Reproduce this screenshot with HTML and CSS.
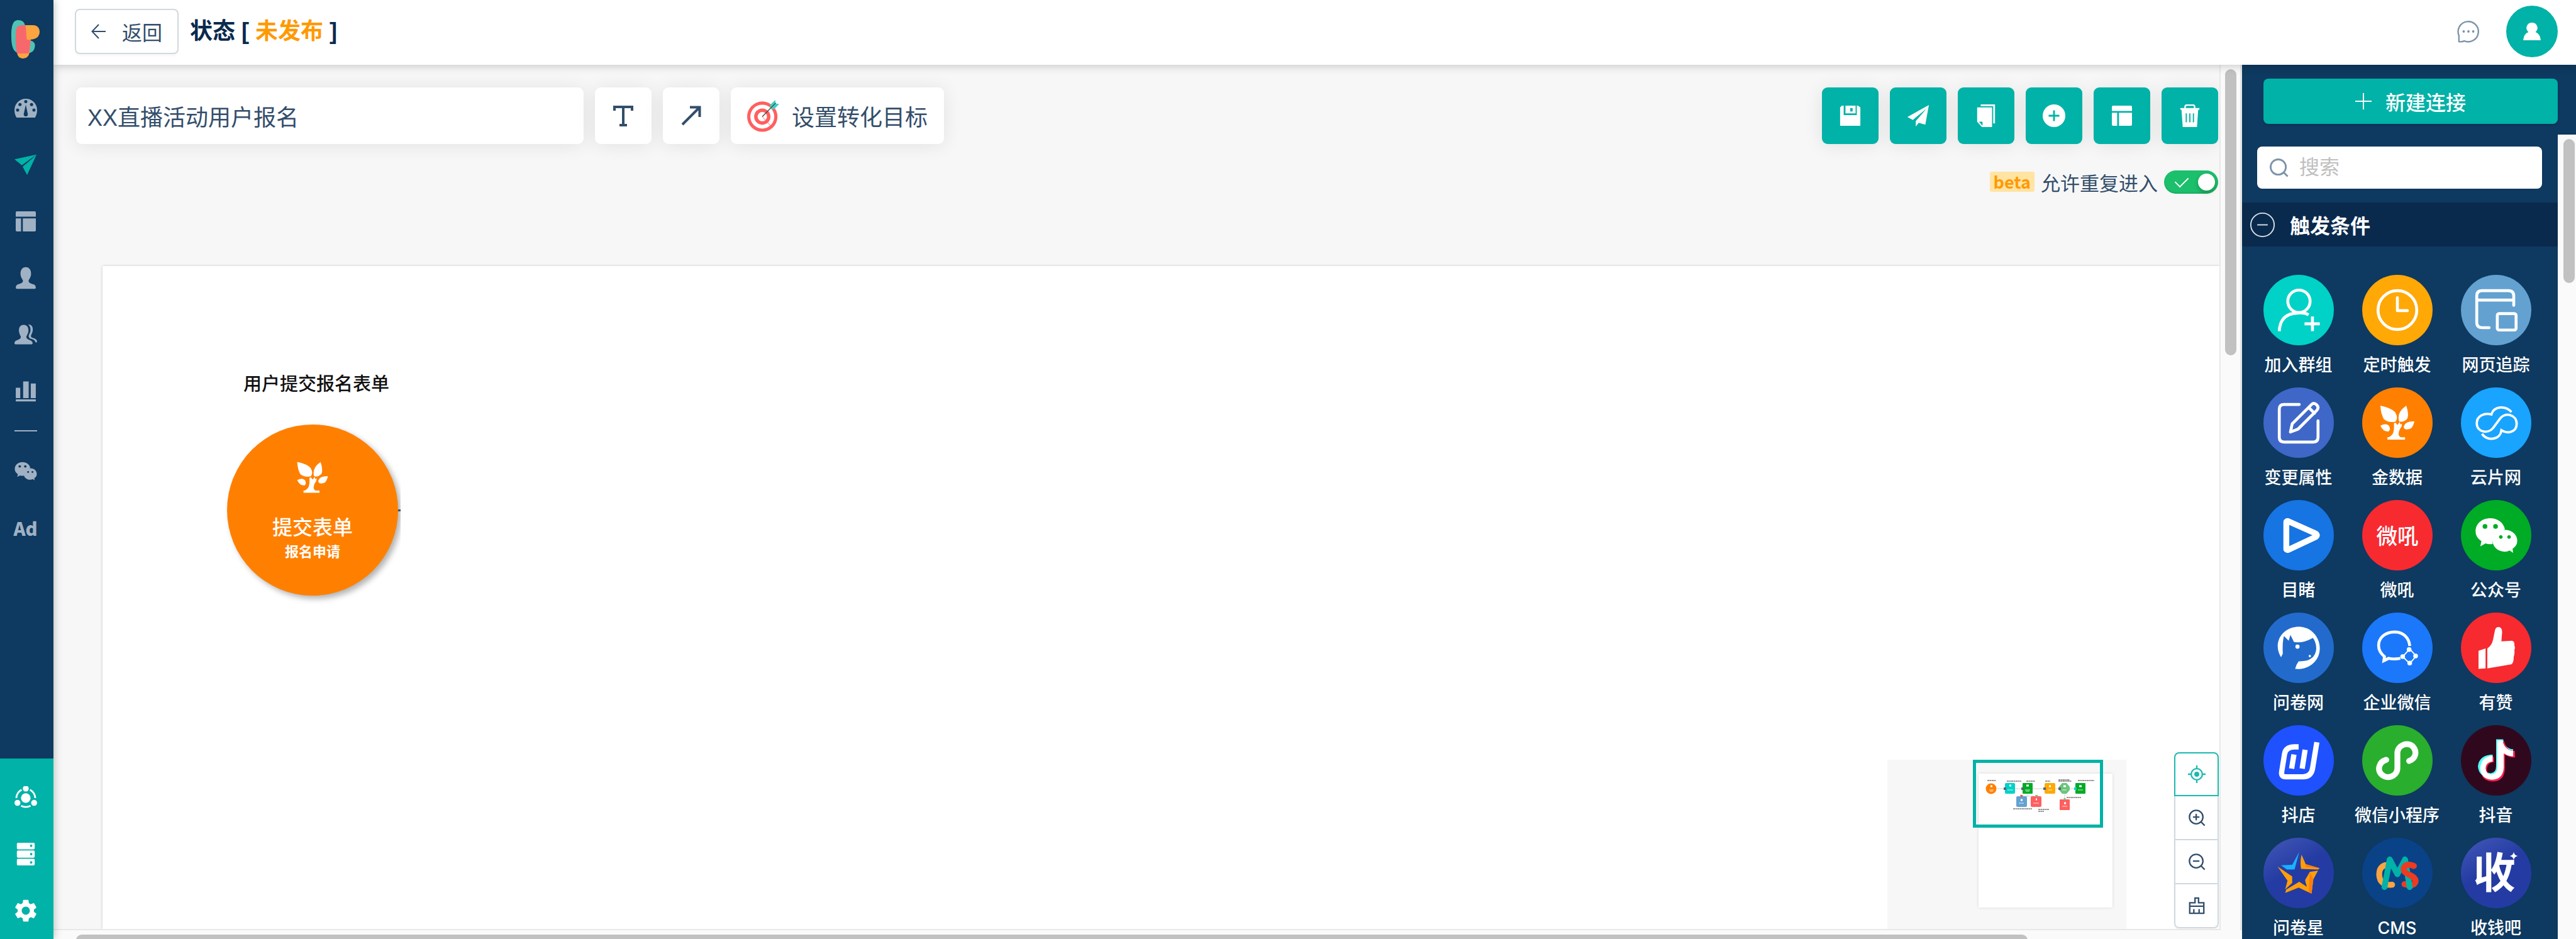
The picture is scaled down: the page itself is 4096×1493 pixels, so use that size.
FILE: index.html
```html
<!DOCTYPE html>
<html lang="zh-CN">

<head>
    <meta charset="UTF-8">
    <meta name="viewport" content="width=device-width, initial-scale=1.0">
    <title>XX直播活动用户报名</title>
    <link rel="stylesheet" href="styles.css">
</head>

<body>
    <!-- shared icons -->
    <svg class="sprite" aria-hidden="true">
        <symbol id="i-layout" viewBox="0 0 34 34">
            <path d="M2 0H32Q34 0 34 2V9H0V2Q0 0 2 0ZM0 12H9V34H2Q0 34 0 32ZM12 12H34V32Q34 34 32 34H12Z" />
        </symbol>
        <symbol id="i-tree" viewBox="28 28 64 64">
            <path d="M31 31Q50 35 56 42Q62 51 57 58Q46 61 37 54Q32 46 31 31ZM75 31Q80 45 77 53Q71 60 63 58Q60 49 65 41Q68 36 75 31ZM31 65Q42 60 46 66Q49 72 45 75Q36 76 31 65ZM89 58Q86 70 80 71Q70 73 71 66Q74 57 89 58ZM54 61L57 60L60 64L64 59L65 63L68 62L67 67Q62 73 62 80Q63 84 66 85H73V89H43V85Q48 85 52 79Q55 73 54 61Z" />
        </symbol>
        <symbol id="i-wechat" viewBox="24 28 73 64">
            <path d="M50 31C36 31 25 40 25 53C25 61 29 66 35 70L33 79L42 74Q47 76 54 75Q53 58 75 50C73 39 63 31 50 31Z" />
            <path d="M75 51C63 51 54 59 54 69.500C54 80 63 88 75 88Q79 88 83 86L89 90L88 83Q96 78 96 69.500C96 59 87 51 75 51Z" />
            <g class="eyes">
                <circle cx="41" cy="45" r="4" />
                <circle cx="59" cy="45" r="4" />
                <circle cx="68" cy="63" r="3" />
                <circle cx="82" cy="63" r="3" />
            </g>
        </symbol>
    </svg>

    <div class="app">
        <nav class="sidebar">
            <a class="logo" href="#" aria-label="首页">
                <svg viewBox="0 0 107 145">
                    <path fill="#4dc3b5" d="M26 0C44 0 52 10 52 25V78H75C88 82 92 92 88 105C84 120 74 125 55 125H28C8 122 0 100 0 62C0 20 6 0 26 0Z" />
                    <path fill="#fba440" d="M40 19H82C98 19 107 29 107 44C107 62 94 73 74 73L68 125C66 138 56 145 44 145C32 145 24 138 22 125Z" />
                    <path fill="#f7686c" d="M17 45C17 28 25 19 40 19H52C57 19 56 72 60 74H74L68 118Q66 126 60 126H22C16 110 16 60 17 45Z" />
                </svg>
            </a>
            <a class="item" href="#" aria-label="仪表盘">
                <svg viewBox="0 0 86 86">
                    <path d="M8 79Q0 66 0 50A43 43 0 0 1 86 50Q86 66 78 79Z" />
                    <g class="eyes">
                        <circle cx="43" cy="18" r="6" />
                        <circle cx="21" cy="29" r="6" />
                        <circle cx="65" cy="29" r="6" />
                        <circle cx="12" cy="50" r="6" />
                        <circle cx="74" cy="50" r="6" />
                        <path d="M43 30L51 66Q50 74 43 74Q36 74 35 66Z" />
                    </g>
                </svg>
            </a>
            <a class="item active" href="#" aria-label="自动流程">
                <svg viewBox="0 0 86 86">
                    <path d="M0 22L84 4L28 45ZM31 50L68 19L84 4L48 82Z" />
                </svg>
            </a>
            <a class="item" href="#" aria-label="页面"><svg class="small"><use href="#i-layout" /></svg></a>
            <a class="item" href="#" aria-label="用户">
                <svg viewBox="0 0 86 86">
                    <path d="M43 2C56 2 64 13 63 29C62 41 56 46 54 52C53 60 58 63 72 67Q81 70 81 80Q81 84 77 84H9Q5 84 5 80Q5 70 14 67C28 63 33 60 32 52C30 46 24 41 23 29C22 13 30 2 43 2Z" />
                </svg>
            </a>
            <a class="item" href="#" aria-label="群组">
                <svg viewBox="0 0 86 86">
                    <path d="M35 6C48 6 54 16 53 30C52 40 47 45 45 51C45 58 50 61 61 65Q69 69 69 76Q69 80 65 80H4Q0 80 0 76Q0 68 8 65C19 61 25 58 24 51C22 45 18 40 17 30C16 16 22 6 35 6Z" />
                    <path d="M52 5C66 3 72 16 69 30C67 40 62 44 63 50Q63 54 72 56Q86 60 86 70Q85 74 80 72Q78 64 66 60Q54 57 54 50C54 42 60 38 61 27Q62 13 52 5Z" />
                </svg>
            </a>
            <a class="item" href="#" aria-label="报表">
                <svg viewBox="0 0 86 86">
                    <path d="M5 30H22V69H5ZM33 6H54V69H33ZM62 14H81V69H62ZM5 74H81V82H5Z" />
                </svg>
            </a>
            <div class="split"></div>
            <a class="item" href="#" aria-label="微信"><svg><use href="#i-wechat" /></svg></a>
            <a class="item ad" href="#">Ad</a>
            <div class="sidebar-bottom">
                <a class="item" href="#" aria-label="连接">
                    <svg viewBox="0 0 38 38">
                        <circle cx="19" cy="20" r="8" />
                        <circle cx="19" cy="4" r="5" />
                        <circle cx="5" cy="28" r="5" />
                        <circle cx="33" cy="28" r="5" />
                        <path fill="none" stroke="#fff" stroke-width="3" d="M12 6Q4 10 3 20M26 6Q34 10 35 20M11 33Q19 37 27 33" />
                    </svg>
                </a>
                <a class="item" href="#" aria-label="数据">
                    <svg viewBox="0 0 38 38">
                        <rect x="4" y="0" width="30" height="11" rx="2" />
                        <rect x="4" y="13" width="30" height="12" rx="2" />
                        <rect x="4" y="27" width="30" height="11" rx="2" />
                        <g class="eyes">
                            <circle cx="28" cy="5" r="2" />
                            <circle cx="28" cy="19" r="2" />
                            <circle cx="28" cy="33" r="2" />
                        </g>
                    </svg>
                </a>
                <a class="item" href="#" aria-label="设置">
                    <svg viewBox="2 2 20 20">
                        <path d="M19.140 12.940c.04-.3.060-.61.060-.94 0-.32-.02-.64-.07-.94l2.030-1.580c.18-.14.230-.41.120-.61l-1.920-3.320c-.12-.22-.37-.29-.59-.22l-2.390.960c-.5-.38-1.030-.7-1.620-.94l-.36-2.540c-.04-.24-.24-.41-.48-.41h-3.840c-.24 0-.43.170-.47.410l-.36 2.540c-.59.240-1.130.570-1.620.940l-2.390-.96c-.22-.08-.47 0-.59.220L2.740 8.870c-.12.210-.08.470.120.610l2.030 1.580c-.05.3-.09.630-.09.940s.02.640.070.940l-2.030 1.580c-.18.140-.23.410-.12.610l1.920 3.320c.12.220.370.290.590.220l2.390-.96c.5.380 1.030.7 1.620.940l.36 2.540c.05.240.240.410.480.410h3.840c.24 0 .44-.17.470-.41l.36-2.540c.59-.24 1.130-.56 1.620-.94l2.390.960c.22.080.470 0 .59-.22l1.920-3.320c.12-.22.070-.47-.12-.61l-2.010-1.580zM12 15.600c-1.980 0-3.600-1.620-3.600-3.600s1.620-3.600 3.600-3.600 3.600 1.620 3.600 3.600-1.620 3.600-3.600 3.600z" />
                    </svg>
                </a>
            </div>
        </nav>

        <div class="content">
            <header class="topbar">
                <button type="button" class="back">
                    <svg viewBox="0 0 24 24"><path d="M23 12H2M12 1L1.500 12L12 23" /></svg>
                    返回
                </button>
                <h1 class="status">状态 [ <span>未发布</span> ]</h1>
                <button type="button" class="chat" aria-label="消息">
                    <svg viewBox="0 0 38 38">
                        <path d="M3 36V26A17 17 0 1 1 12 35Q8 37 3 36Z" />
                        <path class="dots" d="M11 19H11.010M19 19H19.010M27 19H27.010" />
                    </svg>
                </button>
                <button type="button" class="avatar" aria-label="账户">
                    <svg viewBox="0 0 30 30"><path d="M15 0A9 9 0 0 1 21 16Q29 19 30 30H0Q1 19 9 16A9 9 0 0 1 15 0Z" /></svg>
                </button>
            </header>

            <div class="work">
                <main class="editor">
                    <div class="canvas">
                        <div class="toolbar">
                            <input type="text" class="flow-name" value="XX直播活动用户报名" aria-label="流程名称">
                            <button type="button" class="tool" aria-label="文字">
                                <svg viewBox="0 0 34 34"><path d="M3 9V3H31V9M17 3V32M11 32H23" /></svg>
                            </button>
                            <button type="button" class="tool" aria-label="箭头">
                                <svg viewBox="0 0 34 34"><path d="M3 31L30 4M15 3.500H30.500V19" /></svg>
                            </button>
                            <button type="button" class="tool goal">
                                <svg viewBox="0 0 55 55">
                                    <circle cx="26" cy="28.500" r="26" fill="#ff5f60" />
                                    <circle cx="26" cy="28.500" r="20.500" fill="#fff" />
                                    <circle cx="26" cy="28.500" r="14" fill="#ff5f60" />
                                    <circle cx="26" cy="28.500" r="8" fill="#fff" />
                                    <path d="M26 28.500L42 46" fill="none" stroke="#ff5f60" stroke-width="1" />
                                    <path d="M39 9L48 0L49 6L55 7L46 16L40 15Z" fill="#40cfc4" />
                                    <path d="M26 28.500L49 5" fill="none" stroke="#444" stroke-width="1.500" />
                                </svg>
                                设置转化目标
                            </button>
                            <div class="actions">
                                <button type="button" class="action" aria-label="保存">
                                    <svg viewBox="0 0 38 38">
                                        <path d="M5 2H8V18H30V2H32L36 5V36H2V5Z" />
                                        <path fill-rule="evenodd" d="M11 2H28V15H11ZM19 6V12H23V6Z" />
                                    </svg>
                                </button>
                                <button type="button" class="action" aria-label="发布">
                                    <svg viewBox="0 0 38 38"><path d="M37 1L1 21L10 26L33 7L15 28V37L20 31L31 34Z" /></svg>
                                </button>
                                <button type="button" class="action" aria-label="复制">
                                    <svg viewBox="0 0 38 38">
                                        <path d="M10 0H34V32H31V3H10Z" />
                                        <path fill-rule="evenodd" d="M4 5H29V38H12L4 29ZM7 29L13 36V29Z" />
                                    </svg>
                                </button>
                                <button type="button" class="action" aria-label="新增">
                                    <svg viewBox="0 0 38 38">
                                        <circle cx="19" cy="19" r="19" />
                                        <path fill="none" stroke="#00b2a7" stroke-width="3" d="M19 10V28M10 19H28" />
                                    </svg>
                                </button>
                                <button type="button" class="action" aria-label="布局"><svg class="small"><use href="#i-layout" /></svg></button>
                                <button type="button" class="action" aria-label="删除">
                                    <svg viewBox="0 0 38 38">
                                        <path d="M3 6H35V9H33L31 38H7L5 9H3Z" />
                                        <path fill="none" stroke="#fff" stroke-width="2.500" d="M11 7V4Q11 1 14 1H24Q27 1 27 4V7" />
                                        <path fill="none" stroke="#00b2a7" stroke-width="2" d="M13 15V30M19 15V30M25 15V30" />
                                    </svg>
                                </button>
                            </div>
                        </div>

                        <div class="options">
                            <span class="beta">beta</span>
                            <label for="repeat">允许重复进入</label>
                            <input type="checkbox" id="repeat" class="switch" checked>
                        </div>

                        <div class="paper">
                            <div class="node">
                                <p class="node-note">用户提交报名表单</p>
                                <div class="node-clip">
                                    <div class="node-circle">
                                        <svg><use href="#i-tree" /></svg>
                                        <strong>提交表单</strong>
                                        <span>报名申请</span>
                                    </div>
                                </div>
                            </div>
                        </div>

                        <!-- minimap -->
                        <div class="minimap">
                            <svg viewBox="0 0 380 269">
                                <rect x="145" y="22" width="213" height="213" class="mini-paper" />
                                <g stroke="#ccd3da" stroke-width="1">
                                    <path d="M174 46H300M223 55V58M282 54V63M212 58H238" />
                                </g>
                                <circle cx="165" cy="46" r="8.500" fill="#ff8000" />
                                <rect x="187" y="37" width="16" height="17" rx="2" fill="#00d2c8" />
                                <rect x="215" y="37" width="16" height="17" rx="1" fill="#00ab25" />
                                <rect x="250" y="37" width="17" height="17" rx="2" fill="#ffa806" />
                                <path d="M278 37H285L290 43V48L285 54H278L273 48V43Z" fill="#6cc57b" />
                                <rect x="299" y="37" width="16" height="17" rx="1" fill="#00ab25" />
                                <rect x="205" y="58" width="17" height="17" rx="2" fill="#63a1d1" />
                                <rect x="228" y="58" width="17" height="17" rx="2" fill="#ff5f60" />
                                <rect x="274" y="63" width="16" height="17" rx="1" fill="#ff5f60" />
                                <path d="M185 44H189V48H185ZM213 44H217V48H213ZM248 44H252V48H248ZM272 44H276V48H272Z" fill="#56657a" />
                                <path d="M211 56H216L213 60Z" fill="#f44" />
                                <path d="M235 56H240L237 60ZM280 61H284L282 65Z" fill="#6cc57b" />
                                <path d="M297 44H301V48H297Z" fill="#00d2c8" />
                                <path d="M159 33H173M190 34H213M221 34H235M251 34H259M272 32H290M272 34H293M303 33H329M285 60H308M200 78H230M240 79H257M240 82H249" fill="none" stroke="#777" stroke-width="1.500" stroke-dasharray="3 .5" />
                                <path d="M162 48H169M163 50H168M191 48H200M219 48H227M220 50H226M255 48H262M278 48H285M303 48H311M209 69H217M232 69H241M278 74H286" fill="none" stroke="#fff" opacity=".8" />
                                <path d="M164 42H167M194 41H197M221 41H225M257 42H260M280 42H284M305 42H309M212 64H215M236 63H238M281 69H284" fill="none" stroke="#fff" stroke-width="3" />
                                <rect x="138.500" y="2.500" width="202" height="103" class="mini-frame" />
                            </svg>
                        </div>

                        <div class="zoom">
                            <button type="button" class="on" aria-label="定位">
                                <svg viewBox="0 0 30 30"><circle cx="15" cy="15" r="9.500" /><path d="M15 0V6M15 24V30M0 15H6M24 15H30" /><circle cx="15" cy="15" r="3" fill="currentColor" /></svg>
                            </button>
                            <button type="button" aria-label="放大">
                                <svg viewBox="0 0 30 30"><circle cx="14" cy="14" r="11.500" /><path d="M22 22L28.500 28.500M14 8.500V19.500M8.500 14H19.500" /></svg>
                            </button>
                            <button type="button" aria-label="缩小">
                                <svg viewBox="0 0 30 30"><circle cx="14" cy="14" r="11.500" /><path d="M22 22L28.500 28.500M8.500 14H19.500" /></svg>
                            </button>
                            <button type="button" aria-label="清理">
                                <svg viewBox="0 0 30 30"><path d="M3 10H12V2H18V10H27V28H3ZM3 16H27M10 28V21M19 28V21" /></svg>
                            </button>
                        </div>
                    </div>
                    <div class="track-y"><div class="thumb"></div></div>
                    <div class="track-x"><div class="thumb"></div></div>
                </main>

                <aside class="panel">
                    <button type="button" class="new-link">
                        <svg viewBox="0 0 26 26"><path d="M13 0V26M0 13H26" /></svg>
                        新建连接
                    </button>
                    <div class="panel-body">
                        <div class="panel-list">
                            <div class="search">
                                <svg viewBox="0 0 31 31"><circle cx="14" cy="14" r="12.500" /><path d="M23 23L29.500 29.500" /></svg>
                                <input type="search" placeholder="搜索" aria-label="搜索">
                            </div>
                            <h2 class="group">
                                <svg viewBox="0 0 42 42"><circle cx="21" cy="21" r="20" /><path d="M12 21H30" /></svg>
                                触发条件
                            </h2>
                            <div class="triggers">
                                <button type="button" class="trigger">
                                    <svg class="line" style="background:#00d2c8" viewBox="0 0 120 120"><circle cx="60.500" cy="45" r="19" /><path d="M27 96C28 76 38 65 60 65Q70 64 77 68M83.500 71V96M70 83.500H96" /></svg>
                                    加入群组
                                </button>
                                <button type="button" class="trigger">
                                    <svg class="line" style="background:#ffa806" viewBox="0 0 120 120"><circle cx="60" cy="60" r="33" /><path stroke-linecap="round" stroke-linejoin="round" d="M60 39V61H77" /></svg>
                                    定时触发
                                </button>
                                <button type="button" class="trigger">
                                    <svg class="line" style="background:#63a1d1" viewBox="0 0 120 120"><path stroke-linecap="round" d="M90 52V36Q90 27 81 27H36Q27 27 27 36V81Q27 90 36 90H48M27 43H90" /><rect x="62" y="66" width="32" height="28" rx="3" /></svg>
                                    网页追踪
                                </button>
                                <button type="button" class="trigger">
                                    <svg class="line" style="background:#3e67c8" viewBox="0 0 120 120"><path stroke-linecap="round" stroke-linejoin="round" d="M61 29H35Q27 29 27 37V85Q27 93 35 93H85Q93 93 93 85V57M46 76L49 62L82 29Q86 25 91 30Q95 34 91 39L59 71ZM77 34L87 44" /></svg>
                                    变更属性
                                </button>
                                <button type="button" class="trigger">
                                    <svg style="background:#ff8000" viewBox="0 0 120 120"><use href="#i-tree" x="28" y="28" width="64" height="64" /></svg>
                                    金数据
                                </button>
                                <button type="button" class="trigger">
                                    <svg class="line" style="background:#19a4ff" viewBox="0 0 120 120"><path stroke-width="4" d="M86 42C76 30 56 32 52 46C40 43 27 48 27 61C27 76 46 80 55 69L66 54C75 41 95 46 95 62C95 76 80 80 69 73C67 90 44 92 36 79" /></svg>
                                    云片网
                                </button>
                                <button type="button" class="trigger">
                                    <svg class="line" style="background:#1674e3" viewBox="0 0 120 120"><path stroke-width="10" stroke-linejoin="round" d="M39 37Q41 35 44 37L89 57Q93 60 89 63L44 84Q41 86 39 84Z" /></svg>
                                    目睹
                                </button>
                                <button type="button" class="trigger">
                                    <svg style="background:#f72a30" viewBox="0 0 120 120"><text x="60" y="75" text-anchor="middle" class="mark">微吼</text></svg>
                                    微吼
                                </button>
                                <button type="button" class="trigger wx">
                                    <svg style="background:#00ab25" viewBox="0 0 120 120"><use href="#i-wechat" x="24" y="28" width="73" height="64" /></svg>
                                    公众号
                                </button>
                                <button type="button" class="trigger">
                                    <svg style="background:#226bcd" viewBox="0 0 120 120"><path d="M30 76C14 50 34 24 60 24C82 24 96 42 96 61C96 82 78 98 54 96Q56 88 60 83Q88 84 90 62Q90 50 84 43Q68 53 52 50L46 38L43 48L35 40Q32 50 33 70Z" /><circle cx="58" cy="58" r="3.500" /><circle cx="79" cy="74" r="2" /></svg>
                                    问卷网
                                </button>
                                <button type="button" class="trigger">
                                    <svg class="line" style="background:#1b78fb" viewBox="0 0 120 120"><path d="M81 57C80 42 69 33 55 33C39 33 28 43 28 56C28 64 32 70 38 75L37 82L45 78Q54 80 65 78" /><path stroke-width="2" d="M81 62L69 75L81 87L92 74Z" /><path stroke-width="8" stroke-linecap="round" d="M80 63H80.010M69 75H69.010M91 74H91.010M81 86H81.010" /></svg>
                                    企业微信
                                </button>
                                <button type="button" class="trigger">
                                    <svg style="background:#f72a30" viewBox="0 0 120 120"><path d="M45 61Q53 56 55 45L58 30Q60 23 66 25Q71 27 70 36L69 49L87 48Q92 49 91 56Q93 60 91 64Q92 70 90 75Q90 86 86 88L45 95ZM30 65L42 61V95L30 96Z" /></svg>
                                    有赞
                                </button>
                                <button type="button" class="trigger">
                                    <svg class="line" style="background:#1f51ff" viewBox="0 0 120 120"><path stroke-width="9" d="M60 37H53Q38 37 36 49L31 80Q30 88 38 88H67Q82 88 84 72L91 29M52 50L48 74M71 42L66 74" /></svg>
                                    抖店
                                </button>
                                <button type="button" class="trigger">
                                    <svg class="line" style="background:#2aae2e" viewBox="0 0 120 120"><path stroke-width="10" stroke-linecap="round" d="M41 59C28 63 26 76 32 83C42 94 60 87 60 73V48C60 34 78 27 87 37C94 46 91 57 80 61" /></svg>
                                    微信小程序
                                </button>
                                <button type="button" class="trigger">
                                    <svg style="background:#30081e" viewBox="0 0 120 120">
                                        <path fill="#5ff" d="M60 24H72Q75 40 89 41V52Q80 52 72 46V70Q72 90 53 91Q30 89 29 70Q31 51 54 50V60Q42 61 41 71Q42 82 51 82Q60 81 60 70Z" />
                                        <path fill="#ff1f50" d="M65 28H74Q77 43 92 44V55Q82 55 75 50V74Q74 96 54 96Q40 95 36 86Q34 56 56 54V63Q45 64 44 75Q45 86 55 86Q65 85 65 74Z" />
                                        <path fill="#fff" d="M62 26H71Q74 42 89 44V53Q80 53 73 48V72Q72 92 53 93Q34 92 33 74Q34 54 54 52V62Q43 63 42 73Q43 84 52 84Q62 83 62 72Z" />
                                    </svg>
                                    抖音
                                </button>
                                <button type="button" class="trigger">
                                    <svg class="indigo" viewBox="0 0 120 120">
                                        <path fill="#1ab0ff" d="M61 24L53 54L40 54L30 47L49 46Z" />
                                        <path fill="#ff9e0a" d="M65 29L72 45L96 52L93 54L64 53Q62 40 65 29ZM93 56L85 71L82 95L77 93L72 77L71 72L79 58ZM37 94L39 88L61 75L75 84L77 93L60 85ZM24 49L49 66V77L37 88L41 73Z" />
                                        <path fill="#ff7d0a" d="M72 45L96 52L72 50ZM79 58L77 93L82 95L85 71Z" />
                                    </svg>
                                    问卷星
                                </button>
                                <button type="button" class="trigger">
                                    <svg class="line" style="background:#0a4288" viewBox="0 0 120 120"><g stroke-width="10" stroke-linecap="round" stroke-linejoin="round"><path stroke="#fba440" d="M51 47Q29 43 29 63Q30 82 51 80" /><path stroke="#ec3b22" d="M72 79Q88 84 91 75Q92 68 80 63Q69 58 71 51Q75 43 88 48" /><path stroke="#00b2a7" d="M38 84L47 37L60 62L73 37L81 84" /><path stroke="#ec3b22" d="M88 69Q86 66 80 63Q69 58 71 51Q75 43 88 48" /></g></svg>
                                    CMS
                                </button>
                                <button type="button" class="trigger">
                                    <svg class="indigo" viewBox="0 0 120 120"><text x="57" y="86" text-anchor="middle" class="mark big">收</text><path d="M90 24Q91 30 97 31Q91 32 90 38Q89 32 83 31Q89 30 90 24Z" /></svg>
                                    收钱吧
                                </button>
                            </div>
                        </div>
                        <div class="panel-track"><div class="thumb"></div></div>
                    </div>
                </aside>
            </div>
        </div>
    </div>
</body>

</html>
```

FILE: styles.css
```css
* {
    box-sizing: border-box;
}

body {
    margin: 0;
    height: 100vh;
    overflow: hidden;
    font-family: "Liberation Sans", "Noto Sans CJK SC", sans-serif;
    font-size: 32px;
    color: #334e6b;
    background: #f7f7f7;
}

button,
input {
    font: inherit;
    color: inherit;
    margin: 0;
    padding: 0;
    border: none;
    background: none;
}

button {
    display: flex;
    align-items: center;
    justify-content: center;
    cursor: pointer;
}

svg {
    display: block;
    flex: none;
}

.sprite {
    position: absolute;
    width: 0;
    height: 0;
}

.app {
    display: flex;
    height: 100%;
}

/* left menu */
.sidebar {
    --hole: #0e3960;
    position: relative;
    z-index: 3;
    display: flex;
    flex-direction: column;
    flex: 0 0 85px;
    background: #0e3960;
    box-shadow: 1px 0 12px rgba(0, 0, 0, .25);
}

.logo {
    height: 127px;
    padding: 32px 0 0 18px;
}

.logo svg {
    width: 45px;
    height: 61px;
}

.item {
    display: flex;
    align-items: center;
    justify-content: center;
    height: 90px;
    padding-right: 4px;
    color: #a0b1c3;
    fill: currentColor;
    text-decoration: none;
}

.item svg {
    width: 36px;
    height: 36px;
}

.item svg.small {
    width: 32px;
    height: 32px;
}

.item.active {
    color: #00b2a7;
}

.item.ad {
    font-family: "Noto Sans CJK SC", sans-serif;
    font-size: 29px;
    font-weight: 900;
}

.eyes {
    fill: var(--hole);
}

.split {
    width: 36px;
    height: 2px;
    margin: 17px 0 18px 23px;
    background: #a0b1c3;
}

.sidebar-bottom {
    --hole: #00b2a7;
    margin-top: auto;
    padding: 17px 0 0;
    background: #00b2a7;
}

.sidebar-bottom .item {
    color: #fff;
}

/* top bar */
.content {
    display: flex;
    flex-direction: column;
    flex: 1;
    min-width: 0;
}

.topbar {
    position: relative;
    z-index: 2;
    display: flex;
    align-items: center;
    flex: 0 0 103px;
    padding: 0 29px 4px 34px;
    background: #fff;
    box-shadow: 0 2px 14px rgba(0, 0, 0, .2);
}

.back {
    gap: 25px;
    width: 165px;
    height: 72px;
    border: 2px solid #d0d9e0;
    border-radius: 8px;
    box-shadow: 0 3px 3px rgba(0, 0, 0, .03);
}

.back svg {
    width: 24px;
    height: 24px;
    fill: none;
    stroke: #334e6b;
    stroke-width: 2;
}

.status {
    margin: 0 auto 0 18px;
    font-size: 36px;
    font-weight: bold;
    line-height: 72px;
    color: #0a2a4d;
}

.status span {
    color: #f90;
}

.chat svg {
    width: 36px;
    height: 36px;
    fill: none;
    stroke: #7d93aa;
    stroke-width: 2.5;
}

.chat .dots {
    stroke-width: 4;
    stroke-linecap: round;
}

.avatar {
    width: 82px;
    height: 82px;
    margin-left: 42px;
    border-radius: 50%;
    background: #00b2a7;
}

.avatar svg {
    width: 28px;
    height: 28px;
    fill: #fff;
}

/* editor */
.work {
    display: flex;
    flex: 1;
    min-height: 0;
}

.editor {
    display: grid;
    grid-template-columns: 1fr 34px;
    grid-template-rows: 1fr 14px;
    flex: 1;
    min-width: 0;
    background: #fafafa;
}

.canvas {
    position: relative;
    display: flex;
    flex-direction: column;
    overflow: hidden;
    padding-top: 36px;
    background: #f7f7f7;
    border-right: 2px solid #e8e8e8;
    border-bottom: 2px solid #e8e8e8;
}

.toolbar {
    display: flex;
    gap: 18px;
    padding: 0 2px 0 36px;
}

.flow-name,
.tool,
.action {
    height: 90px;
    border-radius: 9px;
    box-shadow: 0 2px 30px rgba(0, 0, 0, .09);
}

.flow-name {
    width: 807px;
    padding: 0 18px;
    font-size: 36px;
    background: #fff;
}

.tool {
    min-width: 90px;
    font-size: 36px;
    background: #fff;
}

.tool svg {
    width: 34px;
    height: 34px;
    fill: none;
    stroke: #334e6b;
    stroke-width: 4;
}

.goal {
    gap: 20px;
    padding: 0 26px;
}

.goal svg {
    width: 51px;
    height: 51px;
    stroke: none;
}

.actions {
    display: flex;
    gap: 18px;
    margin-left: auto;
}

.action {
    width: 90px;
    background: #00b2a7;
}

.action svg {
    width: 36px;
    height: 36px;
    fill: #fff;
}

.action svg.small {
    width: 32px;
    height: 32px;
}

.options {
    display: flex;
    align-items: center;
    justify-content: flex-end;
    gap: 10px;
    height: 38px;
    margin: 41px 2px 115px 0;
    font-size: 31px;
}

.beta {
    padding: 0 6px;
    border-radius: 3px;
    font-family: "Noto Sans CJK SC", sans-serif;
    font-size: 27px;
    font-weight: bold;
    line-height: 32px;
    color: #f90;
    background: #ffe4a3;
}

.switch {
    position: relative;
    width: 86px;
    height: 37px;
    border-radius: 19px;
    appearance: none;
    background: #1cbf6b;
    box-shadow: inset 0 -2px 2px rgba(0, 0, 0, .1);
}

.switch::before {
    content: "";
    position: absolute;
    top: 5px;
    right: 5px;
    width: 27px;
    height: 27px;
    border-radius: 50%;
    background: #fff;
    box-shadow: 0 3px 6px rgba(0, 0, 0, .25);
}

.switch::after {
    content: "";
    position: absolute;
    top: 6px;
    left: 22px;
    width: 10px;
    height: 18px;
    border: solid #fff;
    border-width: 0 2px 2px 0;
    transform: rotate(45deg);
}

.paper {
    position: relative;
    flex: 1;
    margin-left: 78px;
    background: #fff;
    box-shadow: 0 0 4px rgba(0, 0, 0, .2);
}

.node {
    position: absolute;
    left: 178px;
    top: 165px;
    width: 320px;
}

.node-note {
    margin: 0;
    padding-left: 4px;
    font-size: 29px;
    font-weight: 500;
    line-height: 46px;
    text-align: center;
    color: #111;
}

/* the end of the connector is cut off beside the circle */
.node-clip {
    width: 296px;
    padding: 41px 0 30px 20px;
    overflow: hidden;
    background: linear-gradient(#56657a, #56657a) right 176px / 6px 3px no-repeat;
}

.node-circle {
    display: flex;
    flex-direction: column;
    align-items: center;
    width: 272px;
    height: 272px;
    padding-top: 57px;
    border-radius: 50%;
    color: #fff;
    background: #ff8000;
    box-shadow: 5px 5px 10px rgba(0, 0, 0, .3);
}

.node-circle svg {
    width: 54px;
    height: 54px;
    fill: #fff;
}

.node-circle strong {
    margin-top: 30px;
    font-size: 32px;
    font-weight: 500;
    line-height: 46px;
}

.node-circle span {
    font-size: 22px;
    font-weight: bold;
    line-height: 32px;
}

.minimap {
    position: absolute;
    right: 148px;
    bottom: 0;
    width: 380px;
    height: 269px;
    background: #f7f7f7;
}

.mini-paper {
    fill: #fff;
    filter: drop-shadow(0 0 2px rgba(0, 0, 0, .12));
}

.mini-frame {
    fill: none;
    stroke: #00b2a7;
    stroke-width: 5;
}

.zoom {
    position: absolute;
    right: 1px;
    bottom: 1px;
    width: 71px;
    border-radius: 8px;
    background: #fff;
    box-shadow: 0 2px 3px rgba(0, 0, 0, .06);
}

.zoom button {
    width: 71px;
    height: 70px;
    border: 2px solid #d0d9e0;
    border-top: none;
    color: #334e6b;
}

.zoom button:first-child {
    border-radius: 8px 8px 0 0;
}

.zoom button:last-child {
    border-radius: 0 0 8px 8px;
}

.zoom .on {
    border: 2px solid #1cb9af;
    color: #1cb9af;
}

.zoom svg {
    width: 28px;
    height: 28px;
    fill: none;
    stroke: currentColor;
    stroke-width: 2.5;
}

/* scroll tracks */
.thumb {
    border-radius: 9px;
    background: #c1c1c1;
}

.track-y {
    padding: 7px 9px 0 7px;
    border-right: 3px solid #e4e6e8;
}

.track-y .thumb {
    width: 18px;
    height: 455px;
}

.track-x {
    overflow: hidden;
    padding: 7px 0 0 36px;
}

.track-x .thumb {
    width: 91%;
    height: 18px;
}

/* right panel */
.panel {
    display: flex;
    flex-direction: column;
    flex: 0 0 531px;
    min-width: 0;
    padding-top: 22px;
    color: #fff;
    background: #0e3960;
}

.new-link {
    gap: 22px;
    flex: 0 0 72px;
    margin: 0 29px 17px 34px;
    border-radius: 8px;
    font-weight: 500;
    background: #00b2a7;
    box-shadow: 0 2px 3px rgba(0, 0, 0, .15);
}

.new-link svg {
    width: 26px;
    height: 26px;
    fill: none;
    stroke: #fff;
    stroke-width: 2;
}

.panel-body {
    display: flex;
    flex: 1;
    min-height: 0;
}

.panel-list {
    flex: 1;
    min-width: 0;
    overflow: hidden;
    padding-top: 19px;
}

.panel-track {
    flex: 0 0 29px;
    padding: 7px 0 0 9px;
    background: #fafafa;
}

.panel-track .thumb {
    width: 18px;
    height: 229px;
}

.search {
    display: flex;
    align-items: center;
    gap: 17px;
    height: 67px;
    margin: 0 25px 22px 24px;
    padding: 0 20px;
    border-radius: 8px;
    background: #fff;
}

.search svg {
    width: 30px;
    height: 30px;
    fill: none;
    stroke: #7d93aa;
    stroke-width: 3;
}

.search input {
    flex: 1;
    min-width: 0;
    color: #334e6b;
    outline: none;
}

.search input::placeholder {
    color: #bfbfbf;
}

.group {
    display: flex;
    align-items: center;
    gap: 24px;
    height: 70px;
    margin: 0;
    padding-left: 13px;
    font-size: 32px;
    font-weight: bold;
    background: #0a2a4d;
}

.group svg {
    width: 39px;
    height: 39px;
    fill: none;
    stroke: #dbe3ea;
    stroke-width: 2;
}

.triggers {
    display: grid;
    grid-template-columns: repeat(3, 1fr);
    row-gap: 15px;
    padding: 45px 20px 0 11px;
}

.trigger {
    flex-direction: column;
    gap: 12px;
    font-family: Inter, "Noto Sans CJK SC", sans-serif;
    font-size: 27px;
    font-weight: 500;
    line-height: 40px;
}

.trigger svg {
    width: 112px;
    height: 112px;
    border-radius: 50%;
    fill: #fff;
}

.trigger svg.line {
    fill: none;
    stroke: #fff;
    stroke-width: 5;
}

.trigger svg.indigo {
    background: linear-gradient(150deg, #4359b8, #243ba3 45%);
}

.wx {
    --hole: #00ab25;
}

.mark {
    font-family: "Noto Sans CJK SC", sans-serif;
    font-size: 36px;
    font-weight: 500;
}

.mark.big {
    font-size: 72px;
    font-weight: bold;
}
```
